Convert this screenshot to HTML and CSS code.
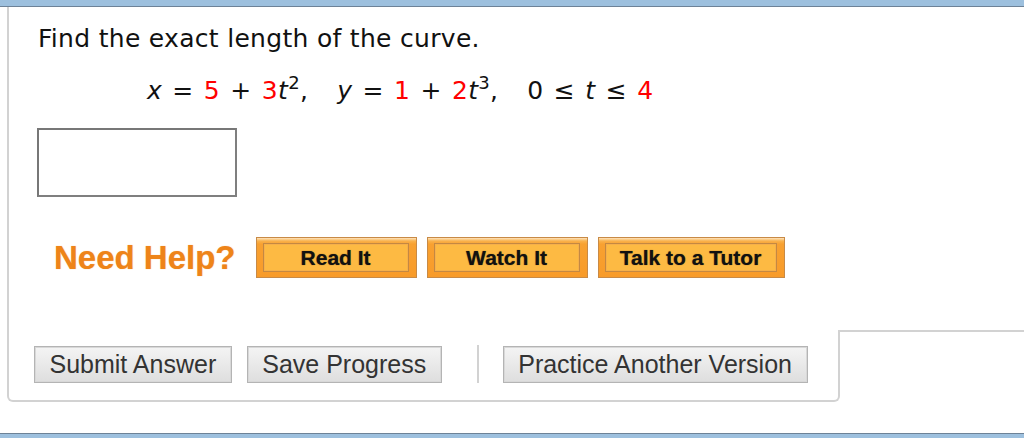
FILE: index.html
```html
<!DOCTYPE html>
<html lang="en">
<head>
<meta charset="utf-8">
<title>Arc length question</title>
<link rel="stylesheet" href="styles.css">
</head>
<body>
<div class="topbar"></div>
<div class="question">
  <p class="prompt">Find the exact length of the curve.</p>
  <div class="math">
    <span class="term"><i>x</i> = <span class="red">5</span> + <span class="red">3</span><i>t</i><sup>2</sup>,</span>
    <span class="term"><i>y</i> = <span class="red">1</span> + <span class="red">2</span><i>t</i><sup>3</sup>,</span>
    <span class="term">0 ≤ <i>t</i> ≤ <span class="red">4</span></span>
  </div>
  <input class="answer" type="text" aria-label="Answer">
  <div class="help">
    <span class="help-label">Need Help?</span>
    <button class="help-btn read"><span>Read It</span></button>
    <button class="help-btn watch"><span>Watch It</span></button>
    <button class="help-btn tutor"><span>Talk to a Tutor</span></button>
  </div>
</div>
<div class="footer">
  <div class="actions">
    <button class="gray-btn">Submit Answer</button>
    <button class="gray-btn">Save Progress</button>
    <span class="sep"></span>
    <button class="gray-btn">Practice Another Version</button>
  </div>
  <div class="spacer"></div>
</div>
<div class="bottombar"></div>
</body>
</html>
```
FILE: styles.css
```css
html, body {
  margin: 0;
  padding: 0;
  background: #fff;
}
body {
  width: 1024px;
  height: 438px;
  overflow: hidden;
  font-family: "DejaVu Sans", Verdana, sans-serif;
  color: #111;
}
.topbar {
  height: 6px;
  background: #9dc0de;
  border-bottom: 1px solid #6d8297;
}
.question {
  margin-left: 7px;
  border-left: 2px solid #d2d2d2;
  padding: 18px 0 0 29px;
  height: 323px;
  box-sizing: border-box;
}
.prompt {
  margin: 0;
  font-size: 25px;
  letter-spacing: 0.3px;
  line-height: 28px;
}
.math {
  margin: 23px 0 0 109px;
  font-size: 25px;
  letter-spacing: 0.3px;
  word-spacing: 2px;
  line-height: 30px;
  display: flex;
  gap: 29px;
}
.math i {
  font-style: italic;
}
.math sup {
  font-size: 18px;
  line-height: 0;
  vertical-align: 10px;
}
.red {
  color: #ff0000;
}
.answer {
  display: block;
  margin: 22px 0 0 -1px;
  width: 200px;
  height: 69px;
  box-sizing: border-box;
  border: 2px solid #7f7f7f;
  border-top-color: #777;
  border-left-color: #777;
  background: #fff;
  padding: 0;
}
.help {
  margin: 40px 0 0 16px;
  display: flex;
  align-items: center;
  gap: 10px;
}
.help-label {
  font-family: "Liberation Sans", Arial, sans-serif;
  font-weight: bold;
  font-size: 33px;
  color: #ee8419;
  margin-right: 10px;
  text-shadow: 0 0 1px rgba(238, 132, 25, 0.6);
}
.help-btn {
  height: 41px;
  box-sizing: border-box;
  border: 1px solid #c88a46;
  background: linear-gradient(#fde3bd 0, #f9b24c 3px, #f8a131 6px, #f89b29 100%);
  padding: 5px 7px 5px 6px;
  margin: 0;
  display: flex;
  cursor: pointer;
}
.help-btn span {
  flex: 1;
  display: block;
  height: 29px;
  box-sizing: border-box;
  border: 1px solid #c48842;
  box-shadow: inset 0 0 0 1px #f6b04a;
  background: #fdba43;
  font-family: "Liberation Sans", Arial, sans-serif;
  font-weight: bold;
  font-size: 21px;
  line-height: 27px;
  color: #111;
  text-align: center;
  text-shadow: 0 0 1px rgba(0, 0, 0, 0.6);
}
.read { width: 161px; }
.watch { width: 161px; }
.tutor { width: 187px; }
.footer {
  display: flex;
  height: 72px;
}
.actions {
  width: 833px;
  margin-left: 7px;
  box-sizing: border-box;
  border-left: 2px solid #d2d2d2;
  border-right: 2px solid #d2d2d2;
  border-bottom: 2px solid #d2d2d2;
  border-radius: 0 0 6px 6px;
  padding: 16px 0 0 25px;
  display: flex;
  align-items: flex-start;
}
.spacer {
  flex: 1;
  border-top: 2px solid #d2d2d2;
}
.gray-btn {
  height: 37px;
  box-sizing: border-box;
  margin: 0 15px 0 0;
  padding: 0 14.5px;
  border: 1px solid #b4b4b4;
  box-shadow: inset 0 0 0 1px #d8d8d8;
  background: linear-gradient(#f4f4f4, #dedede);
  font-family: "Liberation Sans", Arial, sans-serif;
  font-size: 25px;
  line-height: 35px;
  color: #333;
  cursor: pointer;
}
.sep {
  width: 2px;
  height: 38px;
  background: #d2d2d2;
  margin: -1px 24px 0 20px;
}
.bottombar {
  margin-top: 31px;
  height: 5px;
  background: #9dc0de;
  border-top: 1px solid #6d8297;
}
```
